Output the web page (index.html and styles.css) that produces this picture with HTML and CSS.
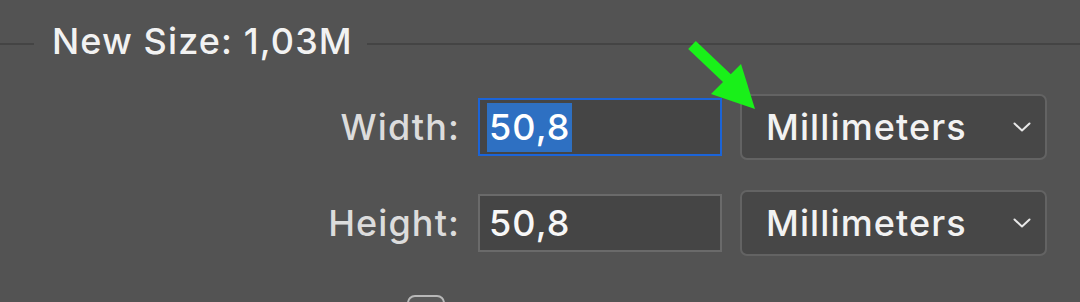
FILE: index.html
```html
<!DOCTYPE html>
<html lang="en">
<head>
<meta charset="utf-8">
<link rel="stylesheet" href="styles.css">
</head>
<body>
<div class="dialog">
  <div class="group-title">
    <span class="rule rule-short"></span>
    <span class="title">New Size: 1,03M</span>
    <span class="rule rule-long"></span>
  </div>
  <div class="fields">
    <label class="label">Width:</label>
    <div class="input input-focus"><span class="selected">50,8</span></div>
    <div class="select"><span class="select-text">Millimeters</span>
      <svg class="chevron" viewBox="0 0 18 10" width="18" height="10"><path d="M1.5 1.5 L9 8.5 L16.5 1.5" fill="none" stroke="#e8e8e8" stroke-width="2" stroke-linecap="round" stroke-linejoin="round"/></svg>
    </div>
    <label class="label">Height:</label>
    <div class="input"><span class="value">50,8</span></div>
    <div class="select"><span class="select-text">Millimeters</span>
      <svg class="chevron" viewBox="0 0 18 10" width="18" height="10"><path d="M1.5 1.5 L9 8.5 L16.5 1.5" fill="none" stroke="#e8e8e8" stroke-width="2" stroke-linecap="round" stroke-linejoin="round"/></svg>
    </div>
  </div>
  <div class="check-row">
    <span class="checkbox"></span>
    <span class="check-label">Relative</span>
  </div>
  <svg class="arrow" viewBox="0 0 80 80" width="80" height="80">
    <line x1="5" y1="5" x2="44" y2="42" stroke="#19f019" stroke-width="11" stroke-linecap="butt"/>
    <polygon points="24,54 54,24 68,69" fill="#19f019"/>
  </svg>
</div>
</body>
</html>
```

FILE: styles.css
```css
html, body {
  margin: 0;
  padding: 0;
  background: #535353;
}

.dialog {
  position: relative;
  width: 1080px;
  height: 302px;
  overflow: hidden;
  font-family: "Inter", "Liberation Sans", sans-serif;
  font-weight: 500;
  letter-spacing: 1.1px;
  color: #e4e4e4;
}

.group-title {
  display: flex;
  align-items: center;
  height: 40px;
  padding-top: 24px;
}

.rule {
  height: 2px;
  background: #444444;
}

.rule-short {
  width: 34px;
}

.rule-long {
  flex: 1;
}

.title {
  padding: 0 14px 6px 18px;
  font-size: 36px;
  line-height: 40px;
  color: #f2f2f2;
  white-space: nowrap;
}

.fields {
  display: grid;
  grid-template-columns: 460px 244px 307px;
  grid-auto-rows: 66px;
  column-gap: 18px;
  row-gap: 30px;
  margin-top: 30px;
}

.label {
  justify-self: end;
  align-self: center;
  font-size: 36px;
  color: #dcdcdc;
}

.input {
  align-self: center;
  box-sizing: border-box;
  height: 58px;
  background: #454545;
  border: 2px solid #6a6a6a;
  display: flex;
  align-items: center;
  padding-left: 7px;
  font-size: 36px;
  color: #f7f7f7;
}

.input-focus {
  border-color: #1b64d8;
}

.selected {
  background: #2e70c2;
  height: 49px;
  line-height: 49px;
  padding: 0 1px 0 2px;
  color: #ffffff;
}

.value {
  padding-left: 2px;
}

.select {
  box-sizing: border-box;
  height: 66px;
  background: #474747;
  border: 2px solid #636363;
  border-radius: 7px;
  display: flex;
  align-items: center;
  justify-content: space-between;
  padding: 0 14px 0 24px;
  font-size: 36px;
  color: #f2f2f2;
}

.chevron {
  display: block;
}

.check-row {
  display: flex;
  align-items: flex-start;
  margin-top: 39px;
  padding-left: 407px;
  gap: 20px;
}

.checkbox {
  box-sizing: border-box;
  width: 38px;
  height: 38px;
  border: 2px solid #b8b8b8;
  border-radius: 8px;
  background: #5a5a5a;
}

.check-label {
  font-size: 36px;
  line-height: 36px;
  margin-top: 6px;
  color: #dcdcdc;
}

.arrow {
  position: absolute;
  left: 687px;
  top: 40px;
}
```
